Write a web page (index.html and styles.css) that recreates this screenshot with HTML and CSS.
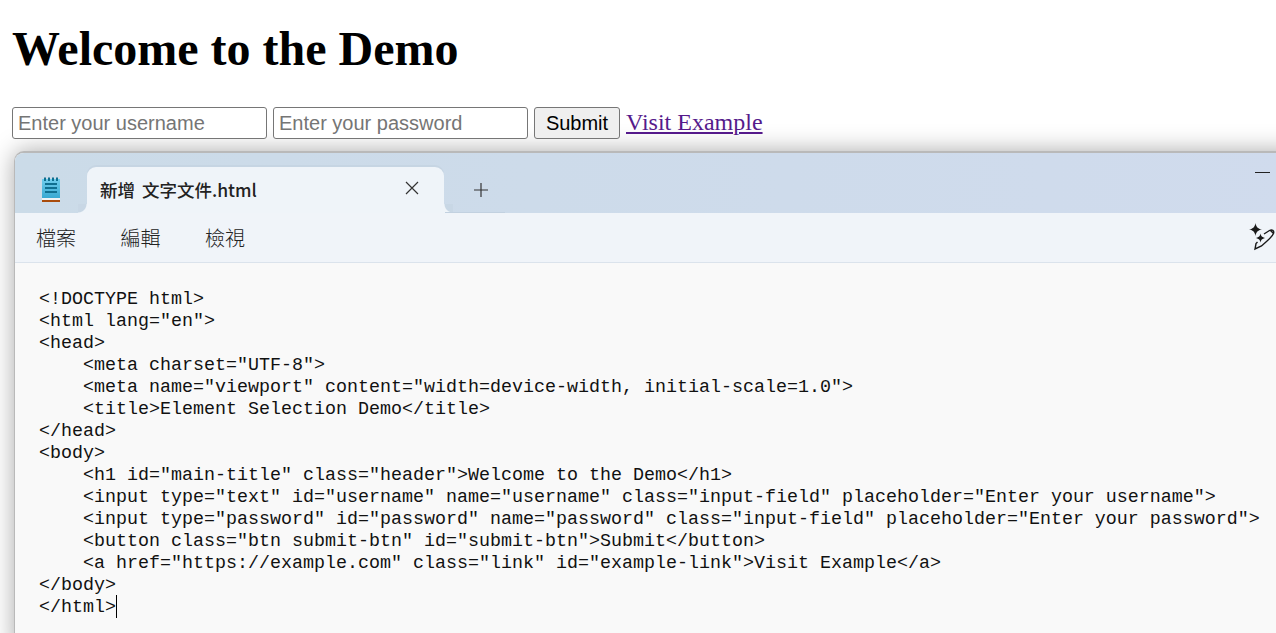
FILE: index.html
```html
<!DOCTYPE html>
<html lang="zh-Hant">
<head>
<meta charset="UTF-8">
<title>Welcome to the Demo</title>
<link rel="stylesheet" href="styles.css">
</head>
<body>
<h1 class="page-title">Welcome to the Demo</h1>
<div class="form-row">
  <input class="field" type="text" placeholder="Enter your username">
  <input class="field" type="password" placeholder="Enter your password">
  <button class="submit" type="button">Submit</button>
  <a class="link" href="#">Visit Example</a>
</div>
<section class="window">
  <header class="titlebar">
    <div class="app-icon">
      <svg width="20" height="26" viewBox="0 0 20 26">
        <defs><linearGradient id="pad" x1="0" y1="0" x2="0" y2="1"><stop offset="0" stop-color="#6fcdec"/><stop offset="1" stop-color="#38a9d2"/></linearGradient></defs>
        <rect x="1" y="2" width="18" height="19" fill="url(#pad)"/>
        <rect x="3" y="0.5" width="2" height="3.5" fill="#0f6f90"/>
        <rect x="7" y="0.5" width="2" height="3.5" fill="#0f6f90"/>
        <rect x="11" y="0.5" width="2" height="3.5" fill="#0f6f90"/>
        <rect x="15" y="0.5" width="2" height="3.5" fill="#0f6f90"/>
        <rect x="4" y="6" width="12" height="2" fill="#0f6f90"/>
        <rect x="4" y="10" width="12" height="2" fill="#0f6f90"/>
        <rect x="4" y="14" width="12" height="2" fill="#0f6f90"/>
        <rect x="1" y="21" width="18" height="2" fill="#eef2f4"/>
        <rect x="1" y="23" width="18" height="2" fill="#a94c0c"/>
      </svg>
    </div>
    <div class="tab">
      <span class="tab-name">新增 文字文件.html</span>
      <svg class="tab-close" width="14" height="14" viewBox="0 0 14 14"><path d="M1 1 L13 13 M13 1 L1 13" stroke="#333" stroke-width="1.2" fill="none"/></svg>
    </div>
    <svg class="tab-add" width="16" height="16" viewBox="0 0 16 16"><path d="M8 1 V15 M1 8 H15" stroke="#333" stroke-width="1.2" fill="none"/></svg>
    <span class="tab-line"></span>
    <span class="minimize"></span>
  </header>
  <nav class="menubar">
    <span class="menu-item">檔案</span>
    <span class="menu-item">編輯</span>
    <span class="menu-item">檢視</span>
    <svg class="copilot" width="26" height="28" viewBox="0 0 26 28">
      <path d="M6.5 0 C7.2 4 8.6 5.6 13 6.5 C8.6 7.4 7.2 9 6.5 13 C5.8 9 4.4 7.4 0 6.5 C4.4 5.6 5.8 4 6.5 0 Z" fill="#1a1a1a"/>
      <path d="M11.5 10.5 C12 13.2 13 14.2 16 15 C13 15.8 12 16.8 11.5 19.5 C11 16.8 10 15.8 7 15 C10 14.2 11 13.2 11.5 10.5 Z" fill="#1a1a1a"/>
      <path d="M15 11 L20.5 7.5 C23 6 25.5 7.5 24.5 10.5 C23.5 13 21 15.5 17.5 18.5 L12.5 23 L6 26 L7 20.5 L8.5 19 M21.5 7.5 L24.5 10.5" stroke="#1a1a1a" stroke-width="1.4" fill="none"/>
    </svg>
  </nav>
  <pre class="editor">&lt;!DOCTYPE html&gt;
&lt;html lang="en"&gt;
&lt;head&gt;
    &lt;meta charset="UTF-8"&gt;
    &lt;meta name="viewport" content="width=device-width, initial-scale=1.0"&gt;
    &lt;title&gt;Element Selection Demo&lt;/title&gt;
&lt;/head&gt;
&lt;body&gt;
    &lt;h1 id="main-title" class="header"&gt;Welcome to the Demo&lt;/h1&gt;
    &lt;input type="text" id="username" name="username" class="input-field" placeholder="Enter your username"&gt;
    &lt;input type="password" id="password" name="password" class="input-field" placeholder="Enter your password"&gt;
    &lt;button class="btn submit-btn" id="submit-btn"&gt;Submit&lt;/button&gt;
    &lt;a href="https://example.com" class="link" id="example-link"&gt;Visit Example&lt;/a&gt;
&lt;/body&gt;
&lt;/html&gt;<span class="caret"></span></pre>
</section>
</body>
</html>
```

FILE: styles.css
```css
* { box-sizing: border-box; }
html, body { margin: 0; height: 633px; overflow: hidden; background: #fff; }
body { padding: 0 0 0 12px; font-family: "Liberation Serif", serif; }
.page-title { margin: 0; padding-top: 21px; height: 107px; font-size: 48px; line-height: 55px; font-weight: 700; color: #000; }
.form-row { display: flex; align-items: flex-start; gap: 6px; height: 32px; }
.field { width: 255px; height: 32px; padding: 1px 5px; border: 1px solid #767676; border-radius: 3px; background: #fff; font-family: "Liberation Sans", sans-serif; font-size: 20px; }
.field::placeholder { color: #757575; opacity: 1; }
.submit { width: 86px; height: 32px; padding: 0; border: 1px solid #767676; border-radius: 3px; background: #efefef; color: #000; font-family: "Liberation Sans", sans-serif; font-size: 20px; }
.link { color: #551a8b; font-size: 24px; line-height: 30px; }
.window { width: 1290px; height: 500px; margin: 12px 0 0 2px; border: 2px solid #b9b9b9; border-width: 2px 0 0 1px; border-top-left-radius: 10px; background: #f9f9f9; box-shadow: 0 0 24px rgba(0,0,0,.34); overflow: hidden; }
.titlebar { display: flex; align-items: flex-end; height: 60px; background: linear-gradient(90deg, #cbdbe8, #d0dbed); position: relative; }
.app-icon { display: flex; width: 72px; height: 46px; padding: 10px 0 0 26px; }
.tab { display: flex; align-items: center; justify-content: space-between; position: relative; width: 357px; height: 46px; padding: 0 25px 2px 13px; border-radius: 9px 9px 0 0; background: #eff4f9; box-shadow: 0 -2px 0 #c6d5e3; }
.tab::before, .tab::after { content: ""; position: absolute; bottom: 0; width: 9px; height: 9px; background: #eff4f9; }
.tab::before { left: -9px; background: radial-gradient(circle at 0 0, #c8d7e5 8px, #eff4f9 9px); }
.tab::after { right: -9px; background: radial-gradient(circle at 100% 0, #c8d7e5 8px, #eff4f9 9px); }
.tab-name { font-family: "Noto Sans CJK TC", "Noto Sans", sans-serif; font-size: 17.5px; font-weight: 500; word-spacing: 3px; color: #222; }
.tab-close { margin-top: -3px; }
.tab-add { margin: 0 0 15px 29px; }
.tab-line { position: absolute; left: 430px; bottom: 0; width: 60px; height: 1px; background: #c2d1e0; }
.minimize { position: absolute; right: 34px; top: 19px; width: 15px; height: 1px; background: #222; }
.menubar { display: flex; align-items: center; gap: 44.5px; height: 50px; padding: 0 29px 0 21px; background: #f0f4f9; border-bottom: 1px solid #dbe3ec; }
.menu-item { font-family: "Noto Sans CJK TC", sans-serif; font-size: 20px; font-weight: 300; color: #222; }
.copilot { margin-left: auto; margin-top: -2px; }
.editor { margin: 0; padding: 26px 0 0 24px; height: 380px; font-family: "Liberation Mono", monospace; font-size: 18.33px; line-height: 22px; color: #111; background: #f9f9f9; }
.caret { display: inline-block; width: 1px; height: 23px; margin-top: -2px; background: #000; vertical-align: top; }
```
